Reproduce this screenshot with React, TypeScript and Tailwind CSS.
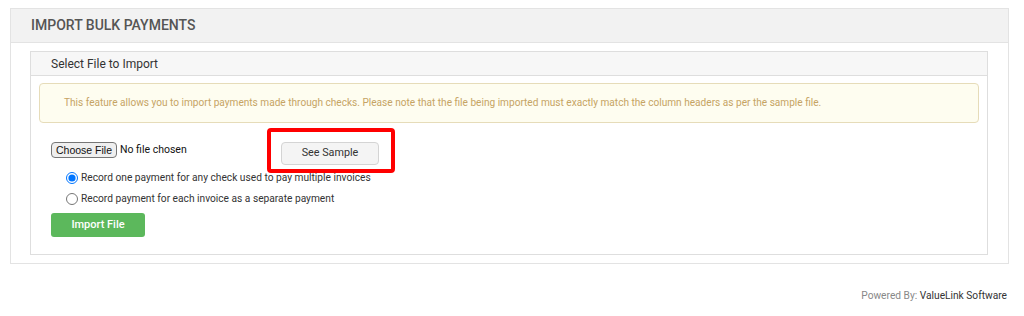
export default function App() {
  return (
    <div className="min-h-[316px] bg-white pt-2 pl-[10px] text-[#333]" style={{ fontFamily: 'Roboto, "Liberation Sans", sans-serif' }}>
      <div className="w-[999px] border border-[#e3e3e3]">
        {/* page header */}
        <div className="flex h-[34px] items-center border-b border-[#e3e3e3] bg-[#f2f2f2] pl-5 text-[14px] font-medium text-[#555]">
          IMPORT BULK PAYMENTS
        </div>

        <div className="pt-2 pr-5 pb-2 pl-[19px]">
          <div className="border border-[#dedede]">
            <div className="flex h-6 items-center border-b border-[#dedede] bg-[#f7f7f7] pl-5 text-[12px] text-[#333]">
              Select File to Import
            </div>

            <div className="px-2 pt-[7px] pb-[17px]">
              <div className="flex h-[40px] items-center rounded border border-[#e6dcb9] bg-[#fefdf0] pl-6 text-[10.1px] text-[#c6a464]">
                This feature allows you to import payments made through checks. Please note that the file being imported must exactly match the column headers as per the sample file.
              </div>

              {/* file + sample */}
              <div className="mt-[5px] flex items-start pl-3">
                <div className="mt-[14px] flex w-[216px] items-center text-[10.5px]">
                  <span className="rounded-sm border border-[#767676] bg-[#efefef] px-[4px] leading-[14px] text-[#111]" style={{ fontFamily: 'Arial, "Liberation Sans", sans-serif' }}>
                    Choose File
                  </span>
                  <span className="ml-[3px] text-[#111]">No file chosen</span>
                </div>
                <div className="h-[45px] w-[128px] rounded-sm border-4 border-[#ff0000] pt-[10px] pl-[10px]">
                  <button className="flex h-[23px] w-[98px] items-center justify-center rounded-sm border border-[#d4d4d4] bg-[#f4f4f4] text-[10.8px] text-[#333]">
                    See Sample
                  </button>
                </div>
              </div>

              {/* options */}
              <div className="-mt-[5px] pl-[27px] text-[10.2px] text-[#333]">
                <label className="flex h-[20px] items-center">
                  <input type="radio" name="mode" defaultChecked className="m-0 mr-[3px] h-[12px] w-[12px]" />
                  Record one payment for any check used to pay multiple invoices
                </label>
                <label className="flex h-[21px] items-center">
                  <input type="radio" name="mode" className="m-0 mr-[3px] h-[12px] w-[12px]" />
                  Record payment for each invoice as a separate payment
                </label>
              </div>

              <div className="mt-[4px] pl-3">
                <button className="flex h-[24px] w-[94px] items-center justify-center rounded-[3px] bg-[#5cb85c] text-[11px] font-medium text-white">
                  Import File
                </button>
              </div>
            </div>
          </div>
        </div>
      </div>

      <div className="mt-[24px] flex w-[997px] justify-end text-[10.2px]">
        <span className="text-[#888]">Powered By:&nbsp;</span>
        <span className="text-[#333]">ValueLink Software</span>
      </div>
    </div>
  );
}
